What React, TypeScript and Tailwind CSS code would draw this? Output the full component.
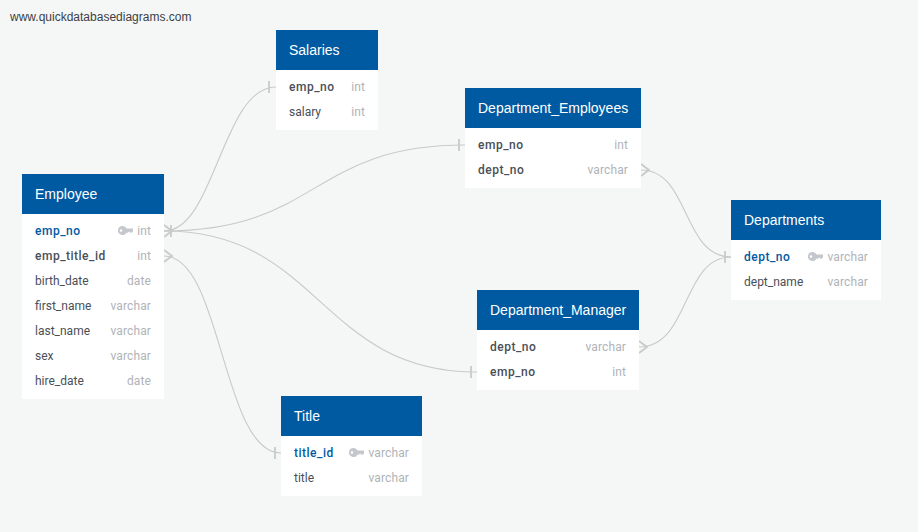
import React from 'react';

type Row = { name: string; type: string; pk?: boolean; bold?: boolean };

const KeyIcon = () => (
    <svg width="15" height="9" viewBox="0 0 15 9" className="shrink-0">
        <path
            fillRule="evenodd"
            fill="#c4c7cc"
            d="M4.4 0A4.5 4.5 0 0 1 8.6 2.6H15V5.2L13.6 6.8H12.6L11.6 5.8H10.8L9.8 6.8H9L8.5 6.4A4.5 4.5 0 1 1 4.4 0ZM3 3.2A1.3 1.3 0 1 0 3 5.8A1.3 1.3 0 1 0 3 3.2Z"
        />
    </svg>
);

const Table = ({ title, rows, className }: { title: string; rows: Row[]; className: string }) => {
    return (
        <div className={`absolute bg-white ${className}`}>
            <div className="h-10 flex items-center px-[13px] bg-[#005aa1] text-white text-[14px] font-['Liberation_Sans',sans-serif]">{title}</div>
            <div className="pt-[4px] pb-[6px]">
                {rows.map((row) => (
                    <div key={row.name} className="h-[25px] flex items-center justify-between px-[13px] text-[12px]">
                        <span className={row.pk ? 'font-medium tracking-[0.5px] text-[#005aa1]' : row.bold ? 'font-medium tracking-[0.5px] text-[#4a4f57]' : 'text-[#4a4f57]'}>
                            {row.name}
                        </span>
                        <span className="flex items-center gap-[4px] text-[#b0b3b8] tracking-[0.12px]">
                            {row.pk && <KeyIcon />}
                            {row.type}
                        </span>
                    </div>
                ))}
            </div>
        </div>
    );
};

const curves = [
    'M164 231 C215 231 222 87 276 87',
    'M164 231 C320 231 310 145 465 145',
    'M164 231 C320 231 320 372 477 372',
    'M164 256 C222 256 222 453 281 453',
    'M641 170 C690 170 682 257 731 257',
    'M639 347 C690 347 682 257 731 257',
];

const ticks = [
    'M269 81 V93',
    'M459 139 V151',
    'M471 366 V378',
    'M275 447 V459',
    'M725 251 V263',
    'M171 225 V237',
    'M164 225 L172 231 L164 237',
    'M164 250 L172 256 L164 262',
    'M641 164 L649 170 L641 176',
    'M639 341 L647 347 L639 353',
];

export default function App() {
    return (
        <div className="relative w-[918px] h-[532px] overflow-hidden bg-[#f5f7f7] font-['Roboto',sans-serif]">
            <div className="absolute left-[10px] top-[8px] text-[12px] text-[#3c3f44] font-['Liberation_Sans',sans-serif]">www.quickdatabasediagrams.com</div>

            <svg className="absolute inset-0" width="918" height="532" fill="none" stroke="#c8caca" strokeWidth="1.1">
                {curves.map((d) => <path key={d} d={d} />)}
                {ticks.map((d) => <path key={d} d={d} strokeWidth="1.8" />)}
            </svg>

            <Table
                title="Employee"
                className="left-[22px] top-[174px] w-[142px]"
                rows={[
                    { name: 'emp_no', type: 'int', pk: true },
                    { name: 'emp_title_id', type: 'int', bold: true },
                    { name: 'birth_date', type: 'date' },
                    { name: 'first_name', type: 'varchar' },
                    { name: 'last_name', type: 'varchar' },
                    { name: 'sex', type: 'varchar' },
                    { name: 'hire_date', type: 'date' },
                ]}
            />
            <Table
                title="Salaries"
                className="left-[276px] top-[30px] w-[102px]"
                rows={[
                    { name: 'emp_no', type: 'int', bold: true },
                    { name: 'salary', type: 'int' },
                ]}
            />
            <Table
                title="Department_Employees"
                className="left-[465px] top-[88px] w-[176px]"
                rows={[
                    { name: 'emp_no', type: 'int', bold: true },
                    { name: 'dept_no', type: 'varchar', bold: true },
                ]}
            />
            <Table
                title="Departments"
                className="left-[731px] top-[200px] w-[150px]"
                rows={[
                    { name: 'dept_no', type: 'varchar', pk: true },
                    { name: 'dept_name', type: 'varchar' },
                ]}
            />
            <Table
                title="Department_Manager"
                className="left-[477px] top-[290px] w-[162px]"
                rows={[
                    { name: 'dept_no', type: 'varchar', bold: true },
                    { name: 'emp_no', type: 'int', bold: true },
                ]}
            />
            <Table
                title="Title"
                className="left-[281px] top-[396px] w-[141px]"
                rows={[
                    { name: 'title_id', type: 'varchar', pk: true },
                    { name: 'title', type: 'varchar' },
                ]}
            />
        </div>
    );
}
